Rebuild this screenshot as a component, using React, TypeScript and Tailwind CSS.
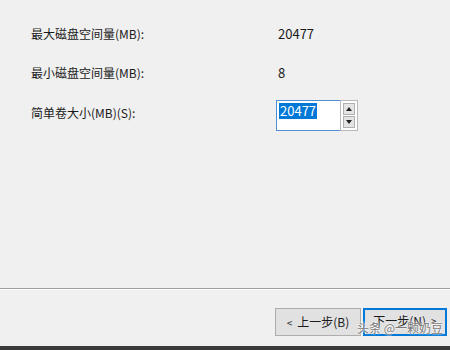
import React from "react";

export default function App() {
  const font = { fontFamily: '"Noto Sans CJK SC", "Noto Sans", sans-serif' };
  return (
    <div
      className="relative w-[450px] h-[350px] bg-[#f0f0f0] flex flex-col overflow-hidden text-[12px] text-[#1a1a1a]"
      style={font}
    >
      <div className="pl-[31px] pt-[24px]">
        <div className="flex h-[20px] items-center">
          <div className="w-[247px]">最大磁盘空间量(MB):</div>
          <div className="text-[13px]">20477</div>
        </div>
        <div className="flex h-[20px] items-center mt-[19px]">
          <div className="w-[247px]">最小磁盘空间量(MB):</div>
          <div className="text-[13px]">8</div>
        </div>
        <div className="flex items-start mt-[17px]">
          <div className="w-[245px] h-[20px] mt-[3px] flex items-center">简单卷大小(MB)(S):</div>
          <div className="flex">
            <div className="w-[64px] h-[31px] border border-[#4f8fd6] border-r-0 bg-white pl-[2px] pt-[1px]">
              <span className="inline-block bg-[#0078d7] text-white text-[13px] leading-[16px] px-px">20477</span>
            </div>
            <div className="w-[18px] h-[31px] border border-[#b9b9b9] bg-white px-[2px] pt-[2px] flex flex-col gap-[1px]">
              <div className="h-[12px] bg-[#e4e4e4] border border-[#b0b0b0] flex items-center justify-center">
                <svg width="6" height="4" viewBox="0 0 6 4"><path d="M3 0 L6 4 L0 4 Z" fill="#222" /></svg>
              </div>
              <div className="h-[12px] bg-[#e4e4e4] border border-[#b0b0b0] flex items-center justify-center">
                <svg width="6" height="4" viewBox="0 0 6 4"><path d="M0 0 L6 0 L3 4 Z" fill="#222" /></svg>
              </div>
            </div>
          </div>
        </div>
      </div>
      <div className="flex-1" />
      <div className="h-px bg-[#a0a0a0]" />
      <div className="h-px bg-white" />
      <div className="h-[56px] pt-[18px] pr-[3px] flex justify-end gap-[2px]">
        <div className="w-[86px] h-[28px] bg-[#e1e1e1] border border-[#adadad] flex items-center justify-center whitespace-nowrap">
          <span className="text-[10px] mr-[5px]">&lt;</span>上一步(B)
        </div>
        <div className="w-[84px] h-[28px] bg-[#e1e1e1] border-2 border-[#0078d7] flex items-center justify-center whitespace-nowrap pb-[3px]">
          下一步(N)<span className="text-[10px] ml-[5px]">&gt;</span>
        </div>
      </div>
      <div className="h-[4px] bg-[#3a3a3a]" />
      <div
        className="absolute left-[357px] top-[321px] text-[12px] text-[#7a7a7a] leading-[14px] whitespace-nowrap"
        style={{ textShadow: "0 0 2px #fff, 0 0 2px #fff" }}
      >
        头条 @一颗奶豆
      </div>
    </div>
  );
}
